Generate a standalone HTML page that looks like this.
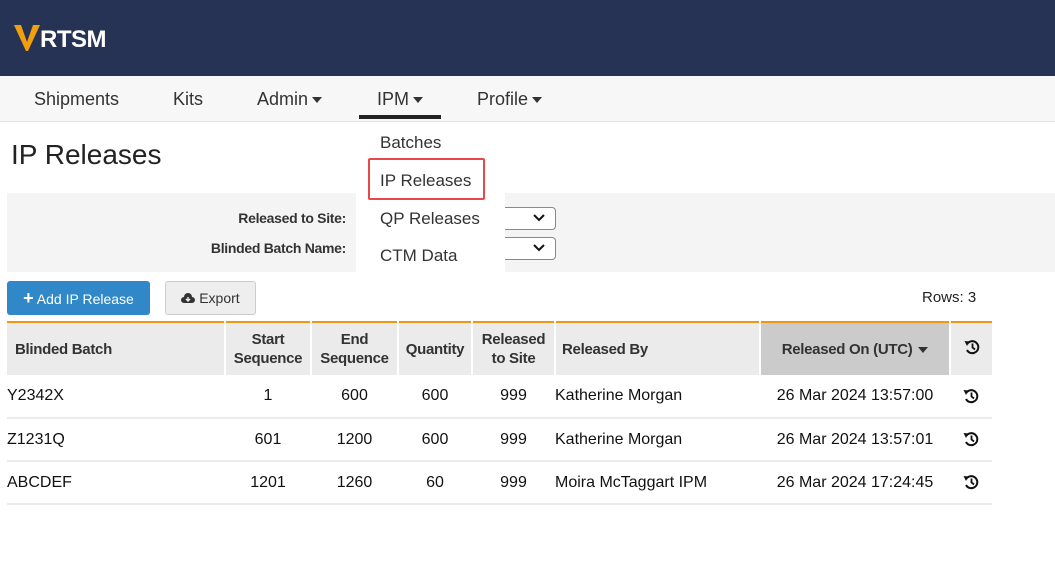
<!DOCTYPE html>
<html><head><meta charset="utf-8"><style>
*{margin:0;padding:0;box-sizing:border-box}
body{width:1055px;height:573px;overflow:hidden;background:#fff;font-family:"Liberation Sans",sans-serif;color:#222;position:relative}
.a{position:absolute}
.top{left:0;top:0;width:1055px;height:76px;background:#263354}
.nav{left:0;top:76px;width:1055px;height:46px;background:#f7f7f7;border-bottom:1px solid #e4e4e4}
.ni{top:89px;font-size:18px;color:#333}
.car{display:inline-block;width:0;height:0;border-left:5px solid transparent;border-right:5px solid transparent;border-top:6px solid #333;vertical-align:middle;margin-left:4px}
.filt{left:7px;top:193px;width:1048px;height:79px;background:#f4f4f4}
.lbl{font-size:14px;font-weight:bold;color:#333;text-align:right;width:340px;left:6px;letter-spacing:-0.3px}
.sel{left:471px;width:85px;height:23px;border:1px solid #888;border-left:none;border-radius:0 4px 4px 0;background:#fff}
.dd{left:356px;top:122px;width:149px;height:150px;background:#fff}
.di{left:380px;font-size:17px;color:#333}
table{position:absolute;left:7px;top:321px;width:985px;border-collapse:collapse;border-top:2px solid #f0960f;font-size:16px;table-layout:fixed}
th{background:#ebebeb;height:53px;font-size:15px;font-weight:bold;color:#333;border-left:2px solid #fff;line-height:19px;letter-spacing:-0.3px}
th:first-child{border-left:none;text-align:left;padding-left:8px}
td{height:43px;border-bottom:2px solid #ebebeb;text-align:center;color:#111}
td:first-child{text-align:left}
</style></head><body>
<div class="a top"></div>
<svg class="a" style="left:14px;top:25px" width="26" height="27" viewBox="0 0 26 27"><path d="M0 0H7L13 17L19 0H26L14 26H12Z" fill="#f29f0f"/></svg>
<div class="a" style="left:40px;top:26px;font-size:24px;font-weight:bold;color:#fff;letter-spacing:-0.5px">RTSM</div>
<div class="a nav"></div>
<div class="a ni" style="left:34px">Shipments</div>
<div class="a ni" style="left:173px">Kits</div>
<div class="a ni" style="left:257px">Admin<span class="car"></span></div>
<div class="a ni" style="left:377px">IPM<span class="car"></span></div>
<div class="a" style="left:359px;top:115px;width:82px;height:4px;background:#222"></div>
<div class="a ni" style="left:477px">Profile<span class="car"></span></div>
<div class="a" style="left:11px;top:139px;font-size:28px;color:#222">IP Releases</div>
<div class="a filt"></div>
<div class="a lbl" style="top:210px">Released to Site:</div>
<div class="a lbl" style="top:240px">Blinded Batch Name:</div>
<div class="a sel" style="top:207px"></div>
<div class="a sel" style="top:237px"></div>
<svg class="a" style="left:533px;top:213px" width="12" height="10"><path d="M1 2L6 7L11 2" stroke="#111" stroke-width="2" fill="none"/></svg>
<svg class="a" style="left:533px;top:243px" width="12" height="10"><path d="M1 2L6 7L11 2" stroke="#111" stroke-width="2" fill="none"/></svg>
<div class="a dd"></div>
<div class="a di" style="top:133px">Batches</div>
<div class="a" style="left:368px;top:158px;width:117px;height:42px;border:2px solid #e8474b;border-radius:2px"></div>
<div class="a di" style="top:171px">IP Releases</div>
<div class="a di" style="top:209px">QP Releases</div>
<div class="a di" style="top:246px">CTM Data</div>
<div class="a" style="left:7px;top:281px;width:143px;height:34px;background:#3088c8;border-radius:3px;color:#fff;font-size:14px;line-height:34px;text-align:center"><b style="font-size:18px">+</b> Add IP Release</div>
<div class="a" style="left:165px;top:281px;width:91px;height:34px;background:#eee;border:1px solid #ccc;border-radius:3px;font-size:14px;line-height:32px;text-align:center;color:#333"><svg width="14" height="11" viewBox="0 0 14 11" style="vertical-align:-1px"><path d="M3 10A3 3 0 0 1 3 4A4 4 0 0 1 11 4A3 3 0 0 1 11 10Z" fill="#333"/><path d="M7 4V8M5 6L7 8L9 6" stroke="#eee" stroke-width="1.4" fill="none"/></svg> Export</div>
<div class="a" style="left:922px;top:289px;font-size:15px;color:#222">Rows: 3</div>
<svg width="0" height="0" style="position:absolute"><defs><symbol id="h" viewBox="0 0 16 16"><path d="M3.2 5A6 6 0 1 1 3 11" stroke="#111" stroke-width="2" fill="none"/><path d="M0.5 2L5.5 2.5L3 7Z" fill="#111"/><path d="M8.5 4.5V8.5L11 10.5" stroke="#111" stroke-width="1.8" fill="none"/></symbol></defs></svg>
<table>
<col style="width:218px"><col style="width:86px"><col style="width:87px"><col style="width:74px"><col style="width:83px"><col style="width:205px"><col style="width:190px"><col style="width:42px">
<tr><th>Blinded Batch</th><th>Start<br>Sequence</th><th>End<br>Sequence</th><th>Quantity</th><th>Released<br>to Site</th><th style="text-align:left;padding-left:6px">Released By</th><th style="background:#cbcbcb">Released On (UTC) <span class="car" style="border-top-color:#333;margin-left:2px"></span></th><th><svg width="16" height="16"><use href="#h"/></svg></th></tr>
<tr><td>Y2342X</td><td>1</td><td>600</td><td>600</td><td>999</td><td style="text-align:left">Katherine Morgan</td><td>26 Mar 2024 13:57:00</td><td><svg width="16" height="16" style="vertical-align:middle"><use href="#h"/></svg></td></tr>
<tr><td>Z1231Q</td><td>601</td><td>1200</td><td>600</td><td>999</td><td style="text-align:left">Katherine Morgan</td><td>26 Mar 2024 13:57:01</td><td><svg width="16" height="16" style="vertical-align:middle"><use href="#h"/></svg></td></tr>
<tr><td>ABCDEF</td><td>1201</td><td>1260</td><td>60</td><td>999</td><td style="text-align:left">Moira McTaggart IPM</td><td>26 Mar 2024 17:24:45</td><td><svg width="16" height="16" style="vertical-align:middle"><use href="#h"/></svg></td></tr>
</table>
</body></html>
